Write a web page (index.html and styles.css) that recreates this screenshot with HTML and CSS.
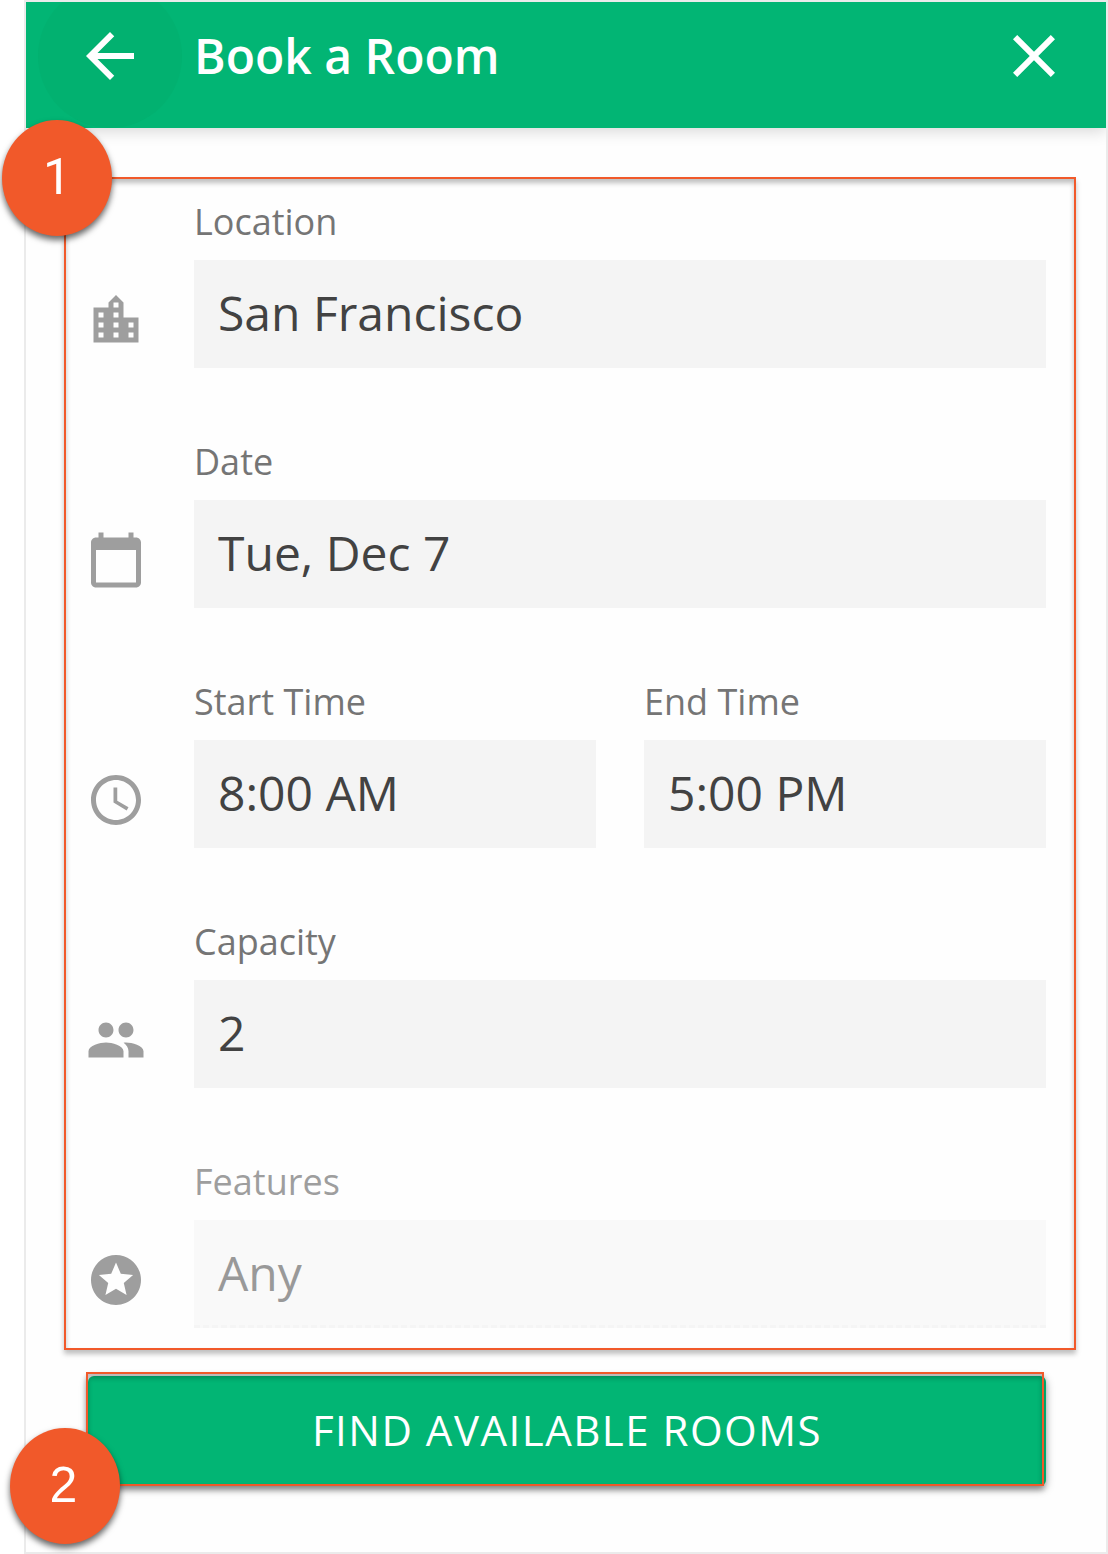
FILE: index.html
```html
<!DOCTYPE html>
<html lang="en">
<head>
    <meta charset="UTF-8">
    <meta name="viewport" content="width=device-width, initial-scale=1.0">
    <title>Book a Room</title>
    <link rel="stylesheet" href="styles.css">
</head>
<body>
    <div class="screen">
        <header class="topbar">
            <a class="back" aria-label="Back">
                <svg class="icon-lg" viewBox="0 0 24 24"><path d="M20 11H7.83l5.59-5.59L12 4l-8 8 8 8 1.41-1.41L7.83 13H20v-2z"/></svg>
            </a>
            <h1>Book a Room</h1>
            <a class="close" aria-label="Close">
                <svg class="icon-lg" viewBox="0 0 24 24"><path d="M19 6.41L17.59 5 12 10.59 6.41 5 5 6.41 10.59 12 5 17.59 6.41 19 12 13.41 17.59 19 19 17.59 13.41 12z"/></svg>
            </a>
        </header>

        <form class="booking">
            <span class="badge badge-1">1</span>

            <div class="row">
                <svg class="icon" viewBox="0 0 24 24"><path d="M15 11V5l-3-3-3 3v2H3v14h18V11h-6zm-8 8H5v-2h2v2zm0-4H5v-2h2v2zm0-4H5V9h2v2zm6 8h-2v-2h2v2zm0-4h-2v-2h2v2zm0-4h-2V9h2v2zm0-4h-2V5h2v2zm6 12h-2v-2h2v2zm0-4h-2v-2h2v2z"/></svg>
                <div class="field">
                    <label>Location</label>
                    <div class="value">San Francisco</div>
                </div>
            </div>

            <div class="row">
                <svg class="icon" viewBox="0 0 24 24"><path d="M20 3h-1V1h-2v2H7V1H5v2H4c-1.1 0-2 .9-2 2v16c0 1.1.9 2 2 2h16c1.1 0 2-.9 2-2V5c0-1.1-.9-2-2-2zm0 18H4V8h16v13z"/></svg>
                <div class="field">
                    <label>Date</label>
                    <div class="value">Tue, Dec 7</div>
                </div>
            </div>

            <div class="row">
                <svg class="icon" viewBox="0 0 24 24"><path d="M11.99 2C6.47 2 2 6.48 2 12s4.47 10 9.99 10C17.52 22 22 17.52 22 12S17.52 2 11.99 2zM12 20c-4.42 0-8-3.58-8-8s3.58-8 8-8 8 3.58 8 8-3.58 8-8 8zm.5-13H11v6l5.25 3.15.75-1.23-4.5-2.67z"/></svg>
                <div class="field">
                    <label>Start Time</label>
                    <div class="value">8:00 AM</div>
                </div>
                <div class="field">
                    <label>End Time</label>
                    <div class="value">5:00 PM</div>
                </div>
            </div>

            <div class="row">
                <svg class="icon" viewBox="0 0 24 24"><path d="M16 11c1.66 0 2.99-1.34 2.99-3S17.66 5 16 5s-3 1.34-3 3 1.34 3 3 3zm-8 0c1.66 0 2.99-1.34 2.99-3S9.66 5 8 5 5 6.34 5 8s1.34 3 3 3zm0 2c-2.33 0-7 1.17-7 3.5V19h14v-2.5c0-2.33-4.67-3.5-7-3.5zm8 0c-.29 0-.62.02-.97.05 1.16.84 1.97 1.97 1.97 3.45V19h6v-2.5c0-2.33-4.67-3.5-7-3.5z"/></svg>
                <div class="field">
                    <label>Capacity</label>
                    <div class="value">2</div>
                </div>
            </div>

            <div class="row">
                <svg class="icon" viewBox="0 0 24 24"><path d="M11.99 2C6.47 2 2 6.48 2 12s4.47 10 9.99 10C17.52 22 22 17.52 22 12S17.52 2 11.99 2zm4.24 16L12 15.45 7.77 18l1.12-4.81-3.73-3.23 4.92-.42L12 5l1.92 4.53 4.92.42-3.73 3.23L16.23 18z"/></svg>
                <div class="field disabled">
                    <label>Features</label>
                    <div class="value">Any</div>
                </div>
            </div>
        </form>

        <div class="actions">
            <button type="button" class="find">FIND AVAILABLE ROOMS</button>
            <span class="outline"></span>
            <span class="badge badge-2">2</span>
        </div>
    </div>
</body>
</html>
```
FILE: styles.css
```css
* {
    box-sizing: border-box;
}
body {
    margin: 0;
    background: #fff;
    font-family: "Open Sans", sans-serif;
}
.screen {
    width: 1084px;
    height: 1554px;
    margin-left: 24px;
    border: 2px solid #ebebeb;
    background: #fefefe;
}

/* header */
.topbar {
    display: flex;
    align-items: center;
    height: 126px;
    padding: 0 36px 18px 12px;
    background: #02b574;
    box-shadow: 0 3px 15px rgba(0, 0, 0, 0.16);
    clip-path: inset(0 0 -30px 0);
}
.topbar h1 {
    flex: 1;
    margin: 0 0 0 12px;
    color: #fff;
    font-size: 48px;
    font-weight: 600;
    line-height: 64px;
}
.back {
    display: flex;
    align-items: center;
    justify-content: center;
    width: 144px;
    height: 144px;
    border-radius: 50%;
    background: #02b170;
}
.icon-lg {
    width: 72px;
    height: 72px;
    fill: #fff;
}
.close {
    display: flex;
}

/* form */
.booking {
    position: relative;
    width: 1012px;
    height: 1173px;
    margin: 49px 0 0 38px;
    padding: 21px 28px 0 20px;
    border: 2px solid #f1592a;
    box-shadow: 0 4px 5px rgba(0, 0, 0, 0.25), inset 0 4px 5px rgba(0, 0, 0, 0.25);
}
.row {
    display: flex;
    height: 240px;
}
.icon {
    width: 60px;
    height: 60px;
    margin: 90px 48px 0 0;
    fill: #9e9e9e;
}
.field {
    flex: 1;
}
.field + .field {
    margin-left: 48px;
}
.field label {
    display: block;
    height: 60px;
    color: #757575;
    font-size: 36px;
    line-height: 44px;
}
.value {
    height: 108px;
    padding-left: 24px;
    background: #f4f4f4;
    color: #424242;
    font-size: 48px;
    line-height: 106px;
}
.disabled label {
    color: #9e9e9e;
}
.disabled .value {
    border-bottom: 3px dashed #f5f5f5;
    background: #f9f9f9;
    color: #999;
}

/* submit */
.actions {
    position: relative;
    width: 958px;
    margin: 26px 0 0 62px;
}
.find {
    display: block;
    width: 958px;
    height: 110px;
    padding: 0 0 4px;
    border: 0;
    border-radius: 6px;
    background: #02b574;
    box-shadow: 0 3px 8px rgba(0, 0, 0, 0.35);
    color: #fff;
    font-family: inherit;
    font-size: 42px;
    letter-spacing: 1.5px;
}
.outline {
    position: absolute;
    top: -4px;
    left: -2px;
    width: 958px;
    height: 114px;
    border: 2px solid #f1592a;
    box-shadow: 0 4px 5px rgba(0, 0, 0, 0.25), inset 0 4px 5px rgba(0, 0, 0, 0.25);
}

/* step markers */
.badge {
    position: absolute;
    width: 110px;
    height: 116px;
    border-radius: 50%;
    background: #f1592a;
    box-shadow: 0 4px 6px rgba(0, 0, 0, 0.6);
    color: #fff;
    font-family: "Liberation Sans", Arial, sans-serif;
    font-size: 50px;
    line-height: 114px;
    text-align: center;
}
.badge-1 {
    top: -59px;
    left: -64px;
    font-family: Roboto, sans-serif;
}
.badge-2 {
    top: 52px;
    left: -78px;
    padding-right: 3px;
}
```
